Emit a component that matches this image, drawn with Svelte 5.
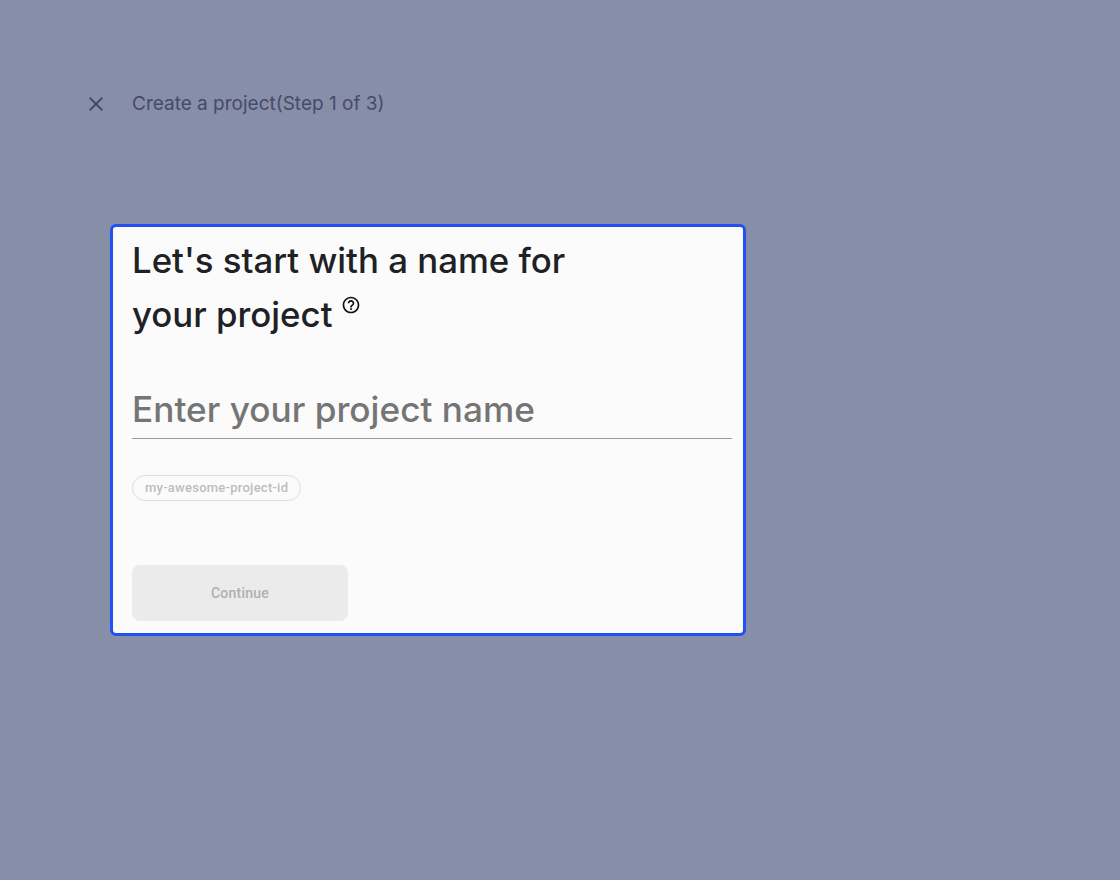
<script lang="ts">
	let projectName = $state('');
</script>

<div class="page">
	<header class="topbar">
		<button class="close" aria-label="Close">
			<svg viewBox="0 0 24 24" width="24" height="24" aria-hidden="true">
				<path d="M19 6.41 17.59 5 12 10.59 6.41 5 5 6.41 10.59 12 5 17.59 6.41 19 12 13.41 17.59 19 19 17.59 13.41 12z" />
			</svg>
		</button>
		<span class="title">Create a project(Step 1 of 3)</span>
	</header>

	<section class="card">
		<h1>
			Let's start with a name for<br />your project<svg class="help" viewBox="0 0 24 24" width="20" height="20" aria-hidden="true">
				<path d="M11 18h2v-2h-2v2zm1-16C6.48 2 2 6.48 2 12s4.48 10 10 10 10-4.48 10-10S17.52 2 12 2zm0 18c-4.41 0-8-3.59-8-8s3.59-8 8-8 8 3.59 8 8-3.59 8-8 8zm0-14c-2.21 0-4 1.79-4 4h2c0-1.1.9-2 2-2s2 .9 2 2c0 2-3 1.75-3 5h2c0-2.25 3-2.5 3-5 0-2.21-1.79-4-4-4z" />
			</svg>
		</h1>
		<input class="name" placeholder="Enter your project name" bind:value={projectName} />
		<div class="chip">my-awesome-project-id</div>
		<button class="continue" disabled>Continue</button>
	</section>
</div>

<style>
	:global(body) {
		margin: 0;
		background: #878ea8;
	}
	.page {
		box-sizing: border-box;
		height: 880px;
		padding: 80px 0 0 84px;
		font-family: Inter, Lato, sans-serif;
		overflow: hidden;
	}
	.topbar {
		display: flex;
		align-items: center;
		gap: 24px;
		height: 46px;
	}
	.close {
		display: flex;
		width: 24px;
		height: 24px;
		margin-top: 2px;
		padding: 0;
		border: 0;
		background: none;
	}
	.close svg {
		fill: #444c68;
	}
	.title {
		font-size: 19px;
		color: #444c68;
	}
	.card {
		box-sizing: border-box;
		display: flex;
		flex-direction: column;
		align-items: flex-start;
		width: 636px;
		height: 412px;
		margin: 98px 0 0 26px;
		padding: 6px 11px 12px 19px;
		background: #fbfbfb;
		border: 3px solid #2250f4;
		border-radius: 6px;
	}
	h1 {
		margin: 0;
		font-size: 34.8px;
		line-height: 54px;
		font-weight: 500;
		color: #202124;
	}
	.help {
		margin-left: 8px;
		vertical-align: 12px;
		fill: #111;
	}
	.name {
		box-sizing: border-box;
		width: 100%;
		height: 54px;
		margin-top: 44px;
		padding: 0 0 5px;
		border: 0;
		border-bottom: 1px solid #9a9a9a;
		outline: 0;
		background: none;
		font: inherit;
		font-size: 35.2px;
		font-weight: 500;
		color: #202124;
	}
	.name::placeholder {
		color: #757575;
		opacity: 1;
	}
	.chip {
		box-sizing: border-box;
		height: 26px;
		margin-top: 36px;
		padding: 0 12px;
		border: 1px solid #dcdcdc;
		border-radius: 13px;
		font: 500 13px/24px Roboto, sans-serif;
		letter-spacing: 0.25px;
		color: #bdbdbd;
	}
	.continue {
		width: 216px;
		height: 56px;
		margin-top: auto;
		border: 0;
		border-radius: 8px;
		background: #ebebeb;
		font: 500 14px Roboto, sans-serif;
		letter-spacing: 0.25px;
		color: #b0b0b0;
	}
</style>
